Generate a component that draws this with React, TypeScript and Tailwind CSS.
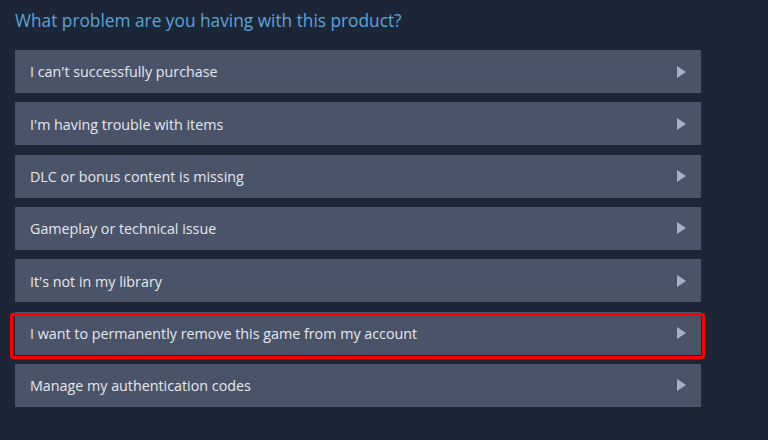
const options = [
  "I can't successfully purchase",
  "I'm having trouble with items",
  'DLC or bonus content is missing',
  'Gameplay or technical issue',
  "It's not in my library",
  'I want to permanently remove this game from my account',
  'Manage my authentication codes',
]

function Arrow() {
  return (
    <svg width="9" height="12" viewBox="0 0 9 12" className="shrink-0">
      <path d="M0 0 L9 6 L0 12 Z" fill="#a4b2c6" />
    </svg>
  )
}

export default function App() {
  return (
    <div className="w-[768px] h-[440px] bg-[#1c2637] overflow-hidden font-['Open_Sans',sans-serif]">
      <div className="pl-[15px] pt-[9px] w-[701px]">
        <h1 className="text-[17.3px] leading-[24px] text-[#5ca3dc]">What problem are you having with this product?</h1>
        <div className="mt-[17px] flex flex-col gap-[9.33px]">
          {options.map((label, i) => (
            <div key={label} className="relative">
              <div className="h-[43px] bg-[#4a5468] flex items-center justify-between pl-[15px] pr-[15px]">
                <span className="text-[14.3px] text-[#e4e8ec] pt-px">{label}</span>
                <Arrow />
              </div>
              {i === 5 && (
                <div className="absolute left-[-5px] right-[-4px] top-[1.5px] bottom-[-4px] border-[3px] border-[#ff0000] rounded-[3px]" />
              )}
            </div>
          ))}
        </div>
      </div>
    </div>
  )
}
